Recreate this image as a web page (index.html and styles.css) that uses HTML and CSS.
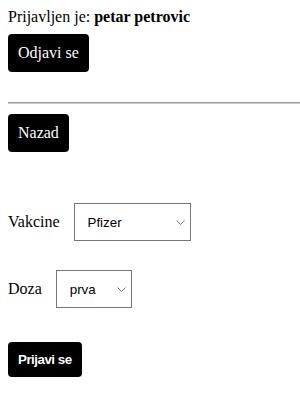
FILE: index.html
```html
<!DOCTYPE html>
<html lang="sr">
<head>
    <meta charset="UTF-8">
    <meta name="viewport" content="width=device-width, initial-scale=1.0">
    <title>Prijava za vakcinaciju</title>
    <link rel="stylesheet" href="styles.css">
</head>
<body>
    <div class="user">Prijavljen je: <strong>petar petrovic</strong></div>
    <button class="btn">Odjavi se</button>

    <hr class="divider">

    <button class="btn">Nazad</button>

    <form class="form">
        <div class="row">
            <label for="vakcina">Vakcine</label>
            <select id="vakcina" class="select select-wide">
                <option>Pfizer</option>
                <option>Sinopharm</option>
                <option>Sputnik V</option>
            </select>
        </div>
        <div class="row">
            <label for="doza">Doza</label>
            <select id="doza" class="select select-narrow">
                <option>prva</option>
                <option>druga</option>
                <option>treca</option>
            </select>
        </div>
        <button type="submit" class="btn btn-submit">Prijavi se</button>
    </form>
</body>
</html>
```

FILE: styles.css
```css
body {
    margin: 8px 0 8px 8px;
    font-family: "Liberation Serif", "Times New Roman", serif;
    font-size: 16px;
    color: #000;
}
.user {
    line-height: 18px;
    margin-bottom: 8px;
}
.btn {
    display: block;
    background: #000;
    color: #fff;
    border: none;
    border-radius: 4px;
    padding: 10px 10px;
    font-family: "Liberation Serif", "Times New Roman", serif;
    font-size: 16px;
    font-weight: normal;
    line-height: 18px;
    cursor: pointer;
}
.divider {
    margin: 30px 0 10px 0;
    border: none;
    border-top: 1px solid #999;
    border-bottom: 1px solid #ccc;
}
.form {
    margin-top: 51px;
}
.row {
    display: flex;
    align-items: center;
    gap: 14px;
    margin-bottom: 29px;
}
.select {
    -webkit-appearance: none;
    appearance: none;
    height: 38px;
    padding: 0 20px 0 13px;
    border: 1px solid #767676;
    border-radius: 0;
    background: #fff url("data:image/svg+xml,%3Csvg xmlns='http://www.w3.org/2000/svg' width='9' height='5' viewBox='0 0 9 5'%3E%3Cpath d='M0.5 0.5 L4.5 4.5 L8.5 0.5' fill='none' stroke='%23777' stroke-width='1'/%3E%3C/svg%3E") no-repeat right 5px center;
    font-family: "Liberation Sans", Arial, sans-serif;
    font-size: 13.33px;
    color: #000;
}
.select-wide {
    width: 117px;
}
.select-narrow {
    width: 76px;
}
.btn-submit {
    margin-top: 34px;
    padding: 9px 10px;
    font-family: "Liberation Sans", Arial, sans-serif;
    font-size: 13.33px;
    font-weight: bold;
    letter-spacing: -0.5px;
    line-height: 17px;
}
```
